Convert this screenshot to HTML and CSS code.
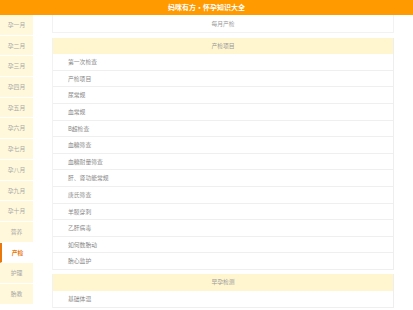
FILE: index.html
```html
<!DOCTYPE html>
<html lang="zh-CN">
<head>
  <meta charset="UTF-8">
  <meta name="viewport" content="width=device-width, initial-scale=1.0">
  <title>妈咪有方•怀孕知识大全</title>
  <link rel="stylesheet" href="styles.css">
</head>
<body>
  <div class="header">妈咪有方•怀孕知识大全</div>

  <div class="page">
    <ul class="sidebar">
      <li>孕一月</li>
      <li>孕二月</li>
      <li>孕三月</li>
      <li>孕四月</li>
      <li>孕五月</li>
      <li>孕六月</li>
      <li>孕七月</li>
      <li>孕八月</li>
      <li>孕九月</li>
      <li>孕十月</li>
      <li>营养</li>
      <li class="active">产检</li>
      <li>护理</li>
      <li>胎教</li>
    </ul>

    <div class="main">
      <div class="content">
        <div class="month-title">每月产检</div>

        <div class="group">
          <div class="group-head">产检项目</div>
          <ul class="items">
            <li>第一次检查</li>
            <li>产检项目</li>
            <li>尿常规</li>
            <li>血常规</li>
            <li>B超检查</li>
            <li>血糖筛查</li>
            <li>血糖耐量筛查</li>
            <li>肝、肾功能常规</li>
            <li>唐氏筛查</li>
            <li>羊膜穿刺</li>
            <li>乙肝病毒</li>
            <li>如何数胎动</li>
            <li>胎心监护</li>
          </ul>
        </div>

        <div class="group">
          <div class="group-head">早孕检测</div>
          <ul class="items">
            <li>基础体温</li>
          </ul>
        </div>
      </div>
    </div>
  </div>
</body>
</html>
```

FILE: styles.css
```css
body {
  margin: 0;
  font-family: "Noto Sans CJK SC", "Noto Sans", sans-serif;
  background: #fff;
  color: #888;
}
ul {
  list-style: none;
  margin: 0;
  padding: 0;
}
.header {
  height: 15px;
  line-height: 15px;
  background-color: #ff9a00;
  color: #fff;
  font-size: 7px;
  font-weight: bold;
  text-align: center;
}
.page {
  display: flex;
  align-items: flex-start;
}
.sidebar {
  width: 33px;
  flex-shrink: 0;
  background-color: #fff8da;
}
.sidebar li {
  height: 19.7px;
  line-height: 19.7px;
  border-bottom: 1px solid #fff;
  text-align: center;
  font-size: 5.8px;
  color: #a8a8a8;
}
.sidebar li.active {
  background-color: #fff;
  border-left: 2px solid #e8780c;
  color: #e8780c;
  font-weight: bold;
}
.main {
  flex: 1;
}
.content {
  width: 90%;
  margin: 0 auto;
}
.month-title {
  height: 17.3px;
  line-height: 17.3px;
  border: 1px solid #f2f2f2;
  border-top: none;
  text-align: center;
  font-size: 5.8px;
  color: #999;
}
.group {
  margin-top: 4.4px;
  border-left: 1px solid #f2f2f2;
  border-right: 1px solid #eee;
}
.group-head {
  height: 16.6px;
  line-height: 16.6px;
  background-color: #fff6d0;
  text-align: center;
  font-size: 5.8px;
  color: #999;
}
.items li {
  height: 15.6px;
  line-height: 15.6px;
  border-bottom: 1px solid #efefef;
  padding-left: 15px;
  font-size: 5.8px;
  color: #888;
}
```
